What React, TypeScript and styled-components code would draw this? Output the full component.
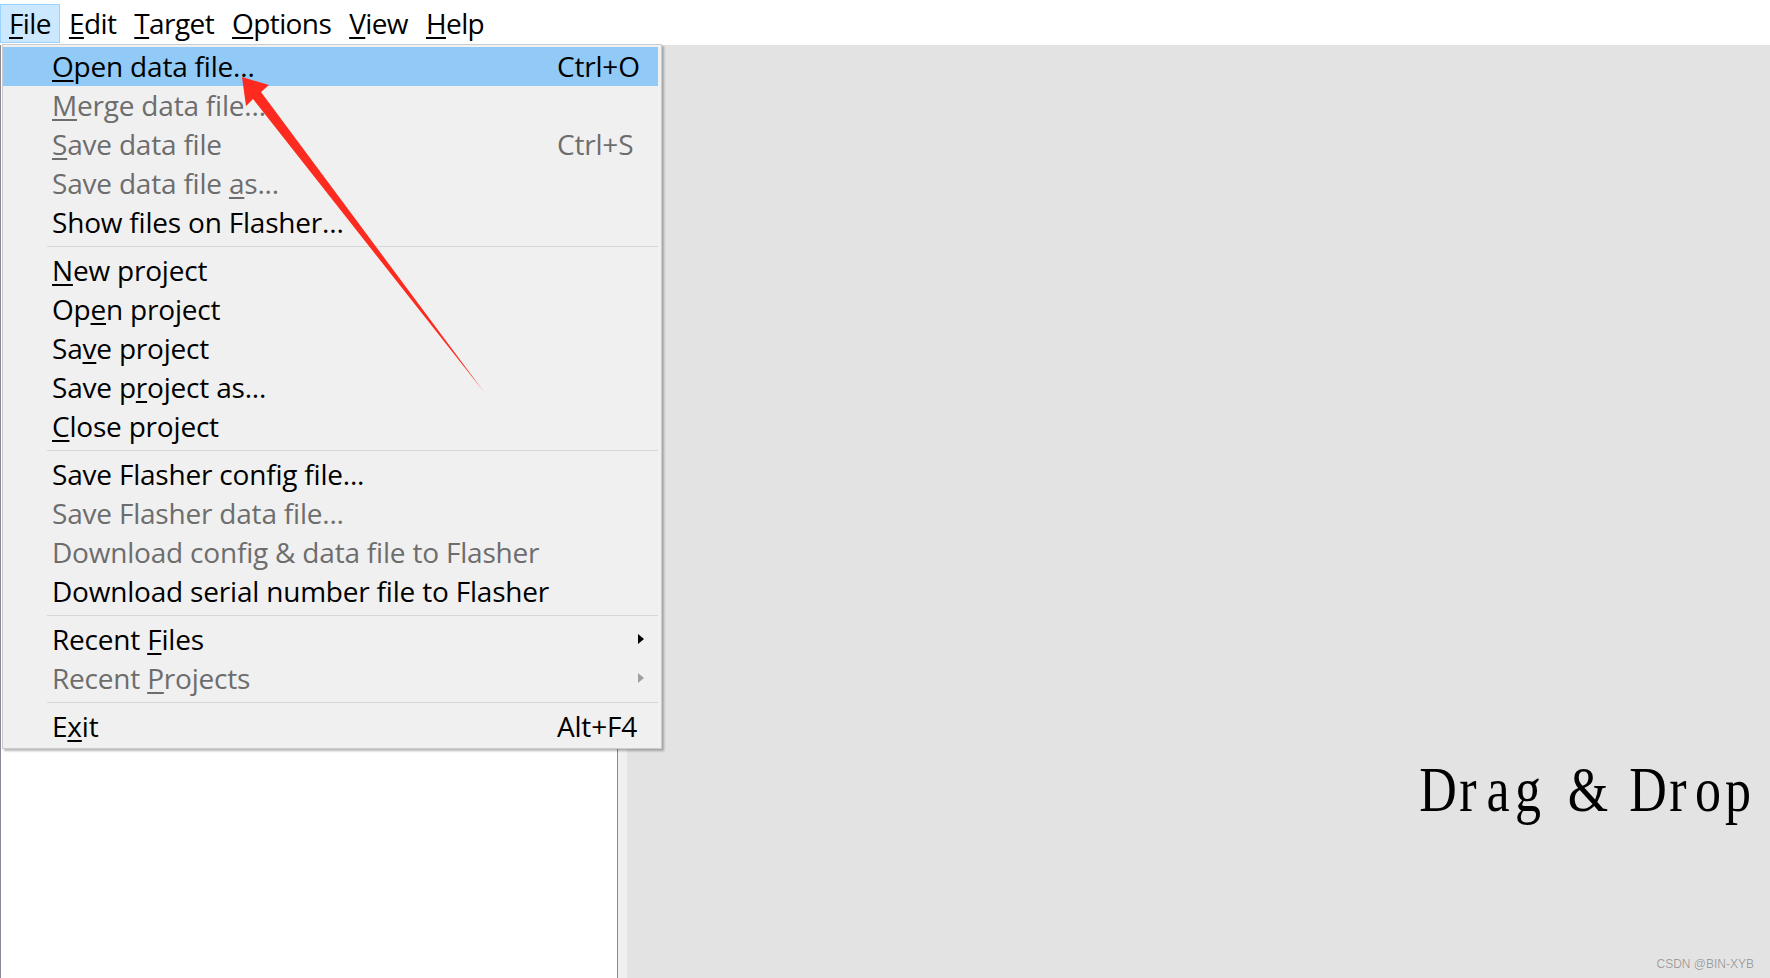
import * as React from "react";
import styled, { createGlobalStyle, css } from "styled-components";

const GlobalStyle = createGlobalStyle`
  html, body {
    margin: 0;
    padding: 0;
    height: 100%;
    overflow: hidden;
  }
  body {
    font-family: "Open Sans", "Noto Sans", sans-serif;
  }
  #root {
    height: 100%;
  }
`;

const uiFont = css`
  font-family: "Open Sans", "Noto Sans", sans-serif;
  font-size: 28px;
`;

const Window = styled.div`
  position: relative;
  display: grid;
  grid-template-rows: 45px 1fr;
  width: 100%;
  height: 100%;
  background: #ffffff;
`;

const MenuBar = styled.div`
  display: flex;
  align-items: flex-start;
  padding-top: 4px;
  background: #ffffff;
  box-sizing: border-box;
`;

const BarItem = styled.div<{ $open?: boolean }>`
  ${uiFont};
  letter-spacing: -0.6px;
  height: 39px;
  line-height: 37px;
  padding: 0 8px;
  color: #000;
  box-sizing: border-box;
  border: 1px solid ${(p) => (p.$open ? "#99d1ff" : "transparent")};
  background: ${(p) => (p.$open ? "#cce8ff" : "transparent")};
`;

const Key = styled.span`
  text-decoration: underline;
  text-decoration-thickness: 2px;
  text-underline-offset: 3px;
`;

const Workspace = styled.div`
  display: flex;
  min-height: 0;
`;

const FileList = styled.div`
  width: 618px;
  flex: none;
  background: #ffffff;
  border-left: 1px solid #8a8a96;
  border-right: 1px solid #8a8a96;
  box-sizing: border-box;
`;

const Splitter = styled.div`
  width: 9px;
  flex: none;
  background: #f0f0f0;
`;

const DropArea = styled.div`
  flex: 1;
  display: flex;
  justify-content: flex-end;
  align-items: flex-start;
  padding: 724px 17px 0 0;
  background: #e3e3e3;
`;

const DropHint = styled.div`
  display: flex;
  font-family: "Liberation Serif", "DejaVu Serif", serif;
  font-size: 52px;
  line-height: 50px;
  color: #000;
  transform: scaleY(1.22);
  transform-origin: 50% 42px;
`;

const Glyph = styled.span`
  width: 30px;
  display: flex;
  justify-content: center;
  white-space: pre;
`;

const Watermark = styled.div`
  position: absolute;
  right: 16px;
  bottom: 7px;
  font-family: "Liberation Sans", Arial, sans-serif;
  font-size: 12px;
  color: #9c9c9c;
  text-shadow: 0 0 1px #ffffff;
`;

const Popup = styled.div`
  position: absolute;
  left: 2px;
  top: 44px;
  width: 660px;
  padding: 2px 3px 2px 0;
  box-sizing: border-box;
  background: #f0f0f0;
  border: 1px solid #cccccc;
  box-shadow: 2px 2px 2px rgba(0, 0, 0, 0.28);
`;

const Row = styled.div<{ $active?: boolean; $disabled?: boolean }>`
  ${uiFont};
  letter-spacing: -0.2px;
  display: grid;
  grid-template-columns: 1fr 101px;
  align-items: center;
  height: 39px;
  line-height: 39px;
  padding-left: 49px;
  white-space: nowrap;
  color: ${(p) => (p.$disabled ? "#6d6d6d" : "#000000")};
  background: ${(p) => (p.$active ? "#91c9f7" : "transparent")};
`;

const Shortcut = styled.span`
  display: flex;
  justify-content: flex-start;
  align-items: center;
  height: 100%;
`;

const SubArrow = styled.span<{ $disabled?: boolean }>`
  margin-left: 81px;
  width: 0;
  height: 0;
  border-top: 5.5px solid transparent;
  border-bottom: 5.5px solid transparent;
  border-left: 6px solid ${(p) => (p.$disabled ? "#a0a0a0" : "#000000")};
  margin-top: -2px;
`;

const Separator = styled.div`
  height: 1px;
  margin: 4px 0 4px 44px;
  background: #d7d7d7;
`;

const ArrowMark = styled.svg`
  position: absolute;
  left: 0;
  top: 0;
  width: 1770px;
  height: 978px;
  pointer-events: none;
`;

type Entry =
  | { sep: true }
  | {
      sep?: false;
      label: string;
      key?: number;
      shortcut?: string;
      disabled?: boolean;
      sub?: boolean;
      active?: boolean;
    };

const menuBar = ["File", "Edit", "Target", "Options", "View", "Help"];

const fileMenu: Entry[] = [
  { label: "Open data file...", key: 0, shortcut: "Ctrl+O", active: true },
  { label: "Merge data file...", key: 0, disabled: true },
  { label: "Save data file", key: 0, shortcut: "Ctrl+S", disabled: true },
  { label: "Save data file as...", key: 15, disabled: true },
  { label: "Show files on Flasher..." },
  { sep: true },
  { label: "New project", key: 0 },
  { label: "Open project", key: 2 },
  { label: "Save project", key: 2 },
  { label: "Save project as...", key: 6 },
  { label: "Close project", key: 0 },
  { sep: true },
  { label: "Save Flasher config file..." },
  { label: "Save Flasher data file...", disabled: true },
  { label: "Download config & data file to Flasher", disabled: true },
  { label: "Download serial number file to Flasher" },
  { sep: true },
  { label: "Recent Files", key: 7, sub: true },
  { label: "Recent Projects", key: 7, sub: true, disabled: true },
  { sep: true },
  { label: "Exit", key: 1, shortcut: "Alt+F4" },
];

function Mnemonic({ text, at }: { text: string; at?: number }) {
  if (at === undefined) return <>{text}</>;
  return (
    <>
      {text.slice(0, at)}
      <Key>{text[at]}</Key>
      {text.slice(at + 1)}
    </>
  );
}

export default function App() {
  return (
    <>
      <GlobalStyle />
      <Window>
        <MenuBar>
          {menuBar.map((m, i) => (
            <BarItem key={m} $open={i === 0}>
              <Mnemonic text={m} at={0} />
            </BarItem>
          ))}
        </MenuBar>
        <Workspace>
          <FileList />
          <Splitter />
          <DropArea>
            <DropHint>
              {"Drag & Drop".split("").map((c, i) => (
                <Glyph key={i}>{c}</Glyph>
              ))}
            </DropHint>
          </DropArea>
        </Workspace>

        <Popup>
          {fileMenu.map((e, i) =>
            e.sep ? (
              <Separator key={i} />
            ) : (
              <Row key={i} $active={e.active} $disabled={e.disabled}>
                <span>
                  <Mnemonic text={e.label} at={e.key} />
                </span>
                <Shortcut>
                  {e.shortcut}
                  {e.sub && <SubArrow $disabled={e.disabled} />}
                </Shortcut>
              </Row>
            )
          )}
        </Popup>

        <ArrowMark viewBox="0 0 1770 978">
          <polygon
            points="242,77 269,85 261,92 484,392 253,99 246,106"
            fill="#fd2a1f"
          />
        </ArrowMark>

        <Watermark>CSDN @BIN-XYB</Watermark>
      </Window>
    </>
  );
}
